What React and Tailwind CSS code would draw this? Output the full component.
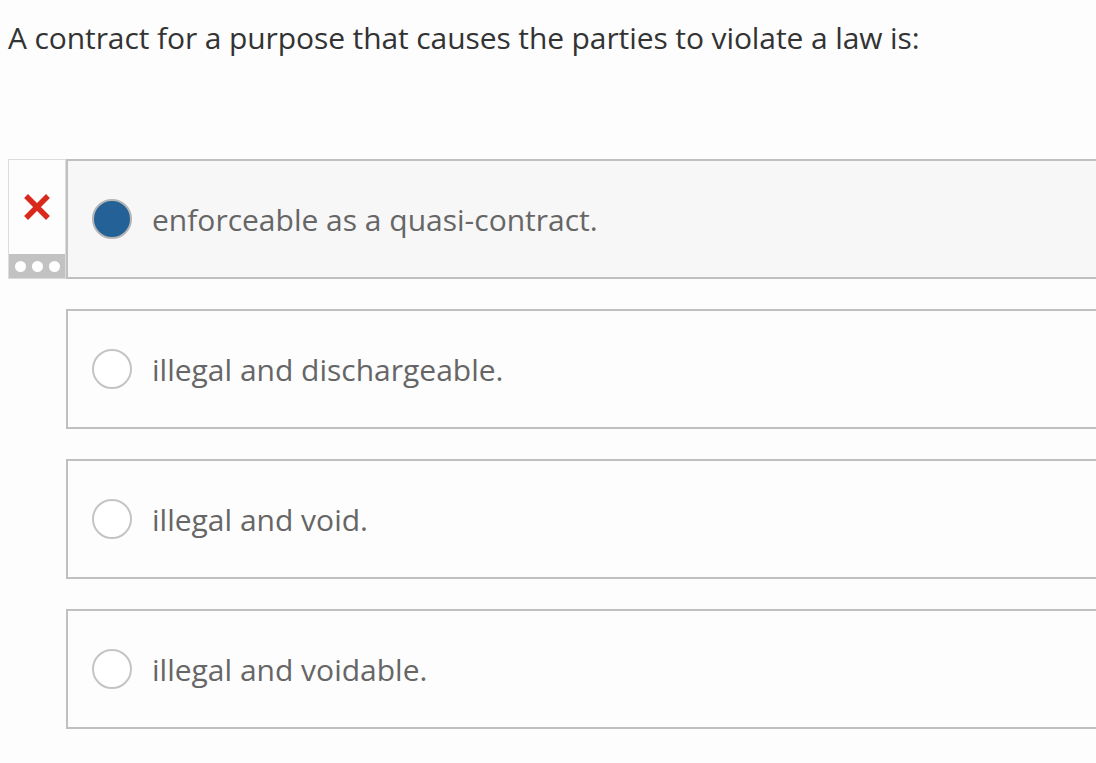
import { useState } from "react";

const options = [
    "enforceable as a quasi-contract.",
    "illegal and dischargeable.",
    "illegal and void.",
    "illegal and voidable.",
];

const App = () => {
    // first answer was picked, and it's wrong
    const [picked] = useState(0);

    return (
        <div
            className="w-[1096px] h-[763px] overflow-hidden bg-[#fdfdfd]"
            style={{ fontFamily: "'Open Sans', 'Liberation Sans', sans-serif" }}
        >
            {/* Question */}
            <h1 className="pl-[8px] pt-[17px] text-[30px] leading-[42px] text-[#333333] font-normal whitespace-nowrap tracking-[-0.1px]">
                A contract for a purpose that causes the parties to violate a law is:
            </h1>

            {/* Answers */}
            <div className="mt-[100px] flex flex-col gap-[30px]">
                {options.map((text, i) => (
                    <div key={i} className="flex items-stretch">
                        {/* Left marker column */}
                        <div className="w-[58px] ml-[8px] shrink-0">
                            {i === picked && (
                                <div className="h-[120px] border border-[#dcdcdc] bg-[#fdfdfd] flex flex-col">
                                    <div className="flex-1 flex items-center justify-center">
                                        <svg width="28" height="28" viewBox="0 0 28 28">
                                            <path
                                                d="M5 5 L23 23 M23 5 L5 23"
                                                stroke="#d9291c"
                                                strokeWidth="5.5"
                                                strokeLinecap="square"
                                            />
                                        </svg>
                                    </div>
                                    <div className="h-[24px] bg-[#c2c2c2] flex items-center justify-center gap-[6px]">
                                        <span className="w-[11px] h-[11px] rounded-full bg-white"></span>
                                        <span className="w-[11px] h-[11px] rounded-full bg-white"></span>
                                        <span className="w-[11px] h-[11px] rounded-full bg-white"></span>
                                    </div>
                                </div>
                            )}
                        </div>

                        {/* Option box */}
                        <div
                            className={`w-[1100px] shrink-0 h-[120px] border-2 border-[#c0c0c0] flex items-center ${
                                i === picked ? "bg-[#f7f7f7]" : "bg-[#fdfdfd]"
                            }`}
                        >
                            <div className="ml-[24px] w-[40px] h-[40px] shrink-0">
                                {i === picked ? (
                                    <div className="w-[40px] h-[40px] rounded-full bg-[#246196] border-2 border-[#b5b5b5]"></div>
                                ) : (
                                    <div className="w-[40px] h-[40px] rounded-full bg-white border-2 border-[#c4c4c4]"></div>
                                )}
                            </div>
                            <span className="ml-[20px] text-[30px] text-[#666666] whitespace-nowrap">
                                {text}
                            </span>
                        </div>
                    </div>
                ))}
            </div>
        </div>
    );
};

export default App;
